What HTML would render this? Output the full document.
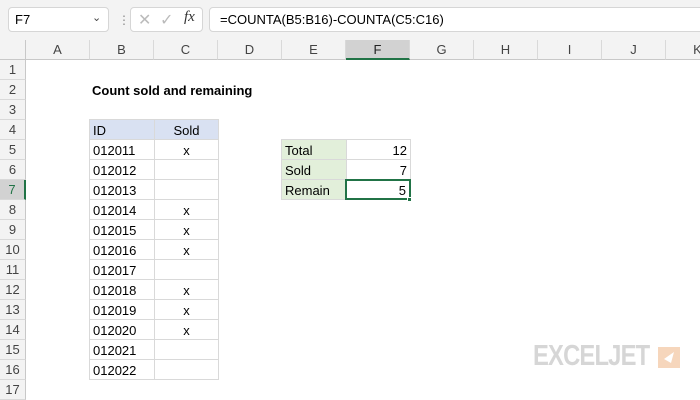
<!DOCTYPE html><html><head><style>
*{margin:0;padding:0;box-sizing:border-box}
body{width:700px;height:400px;overflow:hidden;background:#fff;font-family:"Liberation Sans",Calibri,sans-serif;font-size:13px;color:#000;position:relative}
.a{position:absolute}
.top{left:0;top:0;width:700px;height:40px;background:#f3f3f3}
.box{background:#fff;border:1px solid #d6d6d6;border-radius:4px}
.ch{top:40px;height:20px;background:#f3f3f3;border-right:1px solid #d9d9d9;border-bottom:1px solid #c8c8c8;text-align:center;line-height:19px;color:#444;font-size:13px}
.rh{left:0;width:26px;height:20px;background:#f3f3f3;border-bottom:1px solid #d9d9d9;border-right:1px solid #c8c8c8;text-align:center;line-height:20px;color:#444;font-size:13px}
.c{height:21px;border:1px solid #d9d9d9;line-height:21px;padding:0 3px;white-space:nowrap}
</style></head><body>
<div class="a top"></div>
<div class="a box" style="left:8px;top:7px;width:101px;height:25px"></div>
<div class="a" style="left:15px;top:12px;font-size:13px">F7</div>
<div class="a" style="left:92px;top:11px;font-size:11px;color:#444">&#8964;</div>
<div class="a" style="left:118px;top:13px;color:#888;font-size:12px">⋮</div>
<div class="a box" style="left:130px;top:7px;width:73px;height:25px"></div>
<div class="a" style="left:138px;top:10px;color:#bbb;font-size:16px">✕</div>
<div class="a" style="left:160px;top:10px;color:#bbb;font-size:16px">✓</div>
<div class="a" style="left:184px;top:9px;font-family:'Liberation Serif',serif;font-style:italic;font-size:15px;color:#333">fx</div>
<div class="a box" style="left:209px;top:7px;width:500px;height:25px"></div>
<div class="a" style="left:220px;top:12px;font-size:13px">=COUNTA(B5:B16)-COUNTA(C5:C16)</div>
<div class="a" style="left:0;top:40px;width:26px;height:20px;background:#f3f3f3;border-right:1px solid #c8c8c8;border-bottom:1px solid #c8c8c8"></div>
<div class="a ch" style="left:26px;width:64px">A</div>
<div class="a ch" style="left:90px;width:64px">B</div>
<div class="a ch" style="left:154px;width:64px">C</div>
<div class="a ch" style="left:218px;width:64px">D</div>
<div class="a ch" style="left:282px;width:64px">E</div>
<div class="a ch" style="left:346px;width:64px;background:#d2d2d2;border-bottom:2px solid #217346;color:#222">F</div>
<div class="a ch" style="left:410px;width:64px">G</div>
<div class="a ch" style="left:474px;width:64px">H</div>
<div class="a ch" style="left:538px;width:64px">I</div>
<div class="a ch" style="left:602px;width:64px">J</div>
<div class="a ch" style="left:666px;width:64px">K</div>
<div class="a rh" style="top:60px">1</div><div class="a rh" style="top:80px">2</div><div class="a rh" style="top:100px">3</div><div class="a rh" style="top:120px">4</div><div class="a rh" style="top:140px">5</div><div class="a rh" style="top:160px">6</div>
<div class="a rh" style="top:180px;background:#d2d2d2;border-right:2px solid #217346;color:#217346">7</div>
<div class="a rh" style="top:200px">8</div><div class="a rh" style="top:220px">9</div><div class="a rh" style="top:240px">10</div><div class="a rh" style="top:260px">11</div><div class="a rh" style="top:280px">12</div><div class="a rh" style="top:300px">13</div><div class="a rh" style="top:320px">14</div><div class="a rh" style="top:340px">15</div><div class="a rh" style="top:360px">16</div><div class="a rh" style="top:380px">17</div>
<div class="a" style="left:92px;top:83px;font-weight:bold;font-size:13px">Count sold and remaining</div>
<div class="a c" style="left:89px;top:119px;width:66px;background:#d9e1f2">ID</div>
<div class="a c" style="left:154px;top:119px;width:65px;background:#d9e1f2;text-align:center">Sold</div>
<div class="a c" style="left:89px;top:139px;width:66px">012011</div><div class="a c" style="left:154px;top:139px;width:65px;text-align:center">x</div>
<div class="a c" style="left:89px;top:159px;width:66px">012012</div><div class="a c" style="left:154px;top:159px;width:65px"></div>
<div class="a c" style="left:89px;top:179px;width:66px">012013</div><div class="a c" style="left:154px;top:179px;width:65px"></div>
<div class="a c" style="left:89px;top:199px;width:66px">012014</div><div class="a c" style="left:154px;top:199px;width:65px;text-align:center">x</div>
<div class="a c" style="left:89px;top:219px;width:66px">012015</div><div class="a c" style="left:154px;top:219px;width:65px;text-align:center">x</div>
<div class="a c" style="left:89px;top:239px;width:66px">012016</div><div class="a c" style="left:154px;top:239px;width:65px;text-align:center">x</div>
<div class="a c" style="left:89px;top:259px;width:66px">012017</div><div class="a c" style="left:154px;top:259px;width:65px"></div>
<div class="a c" style="left:89px;top:279px;width:66px">012018</div><div class="a c" style="left:154px;top:279px;width:65px;text-align:center">x</div>
<div class="a c" style="left:89px;top:299px;width:66px">012019</div><div class="a c" style="left:154px;top:299px;width:65px;text-align:center">x</div>
<div class="a c" style="left:89px;top:319px;width:66px">012020</div><div class="a c" style="left:154px;top:319px;width:65px;text-align:center">x</div>
<div class="a c" style="left:89px;top:339px;width:66px">012021</div><div class="a c" style="left:154px;top:339px;width:65px"></div>
<div class="a c" style="left:89px;top:359px;width:66px">012022</div><div class="a c" style="left:154px;top:359px;width:65px"></div>
<div class="a c" style="left:281px;top:139px;width:66px;background:#e2efda">Total</div><div class="a c" style="left:346px;top:139px;width:65px;text-align:right">12</div>
<div class="a c" style="left:281px;top:159px;width:66px;background:#e2efda">Sold</div><div class="a c" style="left:346px;top:159px;width:65px;text-align:right">7</div>
<div class="a c" style="left:281px;top:179px;width:66px;background:#e2efda">Remain</div>
<div class="a c" style="left:345px;top:179px;width:66px;text-align:right;border:2px solid #217346;line-height:19px">5</div>
<div class="a" style="left:407px;top:197px;width:5px;height:5px;background:#217346;border:1px solid #fff"></div>
<div class="a" style="left:533px;top:340px;font-size:29px;font-weight:bold;color:#d6d6d6;letter-spacing:-1px;transform:scaleX(0.82);transform-origin:left">EXCELJET</div>
<div class="a" style="left:658px;top:347px;width:22px;height:21px;background:#f6d6bc"></div>
<svg class="a" style="left:658px;top:347px" width="22" height="21"><path d="M16 5 L6 12 L13 16 Z" fill="#fff"/></svg>
</body></html>
